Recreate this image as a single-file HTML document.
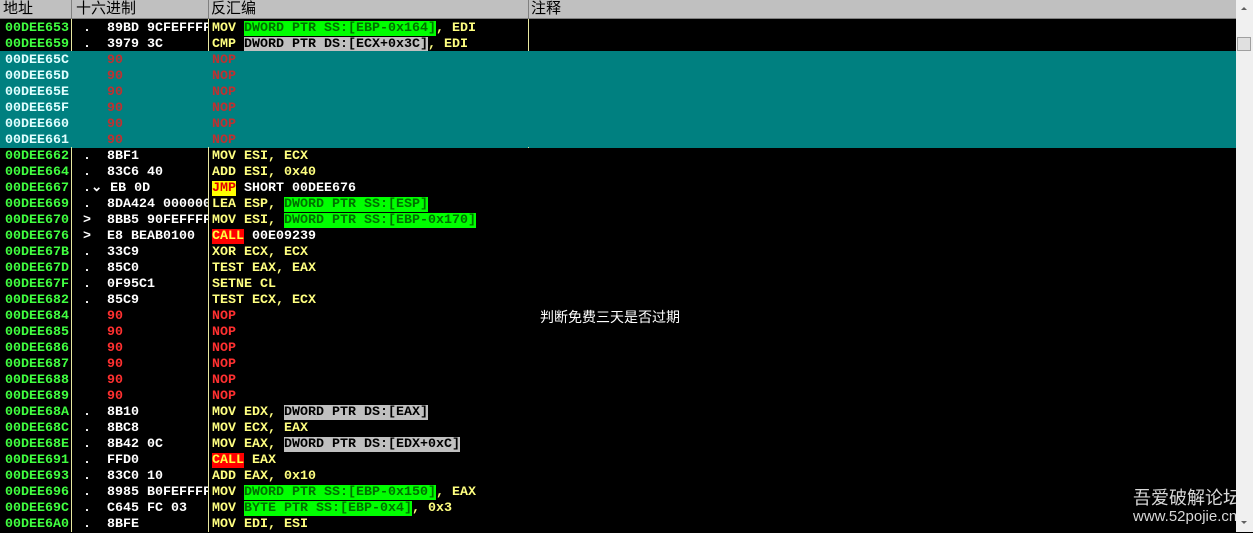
<!DOCTYPE html>
<html><head><meta charset="utf-8"><style>
body{margin:0;width:1253px;height:532px;background:#000;overflow:hidden;position:relative;font-family:"Liberation Mono",monospace;font-weight:bold;font-size:13.33px}
.hdr{position:absolute;left:0;top:0;width:1236px;height:18px;background:#c0c0c0;border-bottom:1px solid #808080;font-family:"Liberation Sans","Noto Sans CJK SC",sans-serif;font-weight:normal;font-size:15px;color:#000}
.hdr span{position:absolute;top:0;line-height:18px}
.vl{position:absolute;top:0;width:1px;height:532px;background:#e8e8a0}
.hl{position:absolute;top:0;width:1px;height:19px;background:#808080}
.r{position:absolute;left:0;width:1236px;height:16px;line-height:16px;white-space:pre}
.t{background:#008080}
.c{position:absolute;top:2px;overflow:hidden;height:16px}
.a{left:5px;width:66px;color:#40ff40}
.t .a{color:#e0ffff}
.h{left:67px;width:141px;color:#fff}
.d{left:212px;width:316px;color:#ffff80}
.red{color:#ff3030}
.t .red{color:#c03030}
.g{background:#00ff00;color:#007000}
.s{background:#c0c0c0;color:#000}
.w{color:#fff}
.j{background:#ffff00;color:#e00000}
.k{background:#ff0000;color:#ffff40}
</style></head><body>
<div class="hdr"><span style="left:3px">地址</span><span style="left:76px">十六进制</span><span style="left:211px">反汇编</span><span style="left:531px">注释</span></div>
<div class="hl" style="left:71px"></div><div class="hl" style="left:208px"></div><div class="hl" style="left:528px"></div>
<div style="position:absolute;left:0;top:51px;width:1236px;height:97px;background:#008080"></div>
<div class="vl" style="left:71px;top:19px;height:513px"></div>
<div class="vl" style="left:208px;top:19px;height:513px"></div>
<div class="vl" style="left:528px;top:19px;height:129px"></div>

<div class="r" style="top:19px"><span class="c a">00DEE653</span><span class="c h">  .  89BD 9CFEFFFF</span><span class="c d">MOV <span class="g">DWORD PTR SS:[EBP-0x164]</span>, EDI</span></div>
<div class="r" style="top:35px"><span class="c a">00DEE659</span><span class="c h">  .  3979 3C</span><span class="c d">CMP <span class="s">DWORD PTR DS:[ECX+0x3C]</span>, EDI</span></div>
<div class="r t" style="top:51px"><span class="c a">00DEE65C</span><span class="c h red">     90</span><span class="c d red">NOP</span></div>
<div class="r t" style="top:67px"><span class="c a">00DEE65D</span><span class="c h red">     90</span><span class="c d red">NOP</span></div>
<div class="r t" style="top:83px"><span class="c a">00DEE65E</span><span class="c h red">     90</span><span class="c d red">NOP</span></div>
<div class="r t" style="top:99px"><span class="c a">00DEE65F</span><span class="c h red">     90</span><span class="c d red">NOP</span></div>
<div class="r t" style="top:115px"><span class="c a">00DEE660</span><span class="c h red">     90</span><span class="c d red">NOP</span></div>
<div class="r t" style="top:131px"><span class="c a">00DEE661</span><span class="c h red">     90</span><span class="c d red">NOP</span></div>
<div class="r" style="top:147px"><span class="c a">00DEE662</span><span class="c h">  .  8BF1</span><span class="c d">MOV ESI, ECX</span></div>
<div class="r" style="top:163px"><span class="c a">00DEE664</span><span class="c h">  .  83C6 40</span><span class="c d">ADD ESI, 0x40</span></div>
<div class="r" style="top:179px"><span class="c a">00DEE667</span><span class="c h">  .⌄ EB 0D</span><span class="c d"><span class="j">JMP</span> <span class="w">SHORT 00DEE676</span></span></div>
<div class="r" style="top:195px"><span class="c a">00DEE669</span><span class="c h">  .  8DA424 00000000</span><span class="c d">LEA ESP, <span class="g">DWORD PTR SS:[ESP]</span></span></div>
<div class="r" style="top:211px"><span class="c a">00DEE670</span><span class="c h">  &gt;  8BB5 90FEFFFF</span><span class="c d">MOV ESI, <span class="g">DWORD PTR SS:[EBP-0x170]</span></span></div>
<div class="r" style="top:227px"><span class="c a">00DEE676</span><span class="c h">  &gt;  E8 BEAB0100</span><span class="c d"><span class="k">CALL</span> <span class="w">00E09239</span></span></div>
<div class="r" style="top:243px"><span class="c a">00DEE67B</span><span class="c h">  .  33C9</span><span class="c d">XOR ECX, ECX</span></div>
<div class="r" style="top:259px"><span class="c a">00DEE67D</span><span class="c h">  .  85C0</span><span class="c d">TEST EAX, EAX</span></div>
<div class="r" style="top:275px"><span class="c a">00DEE67F</span><span class="c h">  .  0F95C1</span><span class="c d">SETNE CL</span></div>
<div class="r" style="top:291px"><span class="c a">00DEE682</span><span class="c h">  .  85C9</span><span class="c d">TEST ECX, ECX</span></div>
<div class="r" style="top:307px"><span class="c a">00DEE684</span><span class="c h red">     90</span><span class="c d red">NOP</span><span style="position:absolute;left:540px;top:2px;color:#fff;font-family:'Liberation Sans','Noto Sans CJK SC',sans-serif;font-weight:normal;font-size:14px">判断免费三天是否过期</span></div>
<div class="r" style="top:323px"><span class="c a">00DEE685</span><span class="c h red">     90</span><span class="c d red">NOP</span></div>
<div class="r" style="top:339px"><span class="c a">00DEE686</span><span class="c h red">     90</span><span class="c d red">NOP</span></div>
<div class="r" style="top:355px"><span class="c a">00DEE687</span><span class="c h red">     90</span><span class="c d red">NOP</span></div>
<div class="r" style="top:371px"><span class="c a">00DEE688</span><span class="c h red">     90</span><span class="c d red">NOP</span></div>
<div class="r" style="top:387px"><span class="c a">00DEE689</span><span class="c h red">     90</span><span class="c d red">NOP</span></div>
<div class="r" style="top:403px"><span class="c a">00DEE68A</span><span class="c h">  .  8B10</span><span class="c d">MOV EDX, <span class="s">DWORD PTR DS:[EAX]</span></span></div>
<div class="r" style="top:419px"><span class="c a">00DEE68C</span><span class="c h">  .  8BC8</span><span class="c d">MOV ECX, EAX</span></div>
<div class="r" style="top:435px"><span class="c a">00DEE68E</span><span class="c h">  .  8B42 0C</span><span class="c d">MOV EAX, <span class="s">DWORD PTR DS:[EDX+0xC]</span></span></div>
<div class="r" style="top:451px"><span class="c a">00DEE691</span><span class="c h">  .  FFD0</span><span class="c d"><span class="k">CALL</span> EAX</span></div>
<div class="r" style="top:467px"><span class="c a">00DEE693</span><span class="c h">  .  83C0 10</span><span class="c d">ADD EAX, 0x10</span></div>
<div class="r" style="top:483px"><span class="c a">00DEE696</span><span class="c h">  .  8985 B0FEFFFF</span><span class="c d">MOV <span class="g">DWORD PTR SS:[EBP-0x150]</span>, EAX</span></div>
<div class="r" style="top:499px"><span class="c a">00DEE69C</span><span class="c h">  .  C645 FC 03</span><span class="c d">MOV <span class="g">BYTE PTR SS:[EBP-0x4]</span>, 0x3</span></div>
<div class="r" style="top:515px"><span class="c a">00DEE6A0</span><span class="c h">  .  8BFE</span><span class="c d">MOV EDI, ESI</span></div>

<div style="position:absolute;left:1133px;top:484px;color:#d8d8d8;font-family:'Liberation Sans','Noto Sans CJK SC',sans-serif;font-weight:normal;font-size:18px;white-space:nowrap">吾爱破解论坛</div>
<div style="position:absolute;left:1133px;top:508px;color:#d8d8d8;font-family:'Liberation Sans',sans-serif;font-weight:normal;font-size:15px;white-space:nowrap">www.52pojie.cn</div>

<div style="position:absolute;left:1236px;top:0;width:17px;height:532px;background:#f0f0f0"></div>
<div style="position:absolute;left:1241px;top:7px;width:0;height:0;border-left:3px solid transparent;border-right:3px solid transparent;border-bottom:3px solid #606060"></div>
<div style="position:absolute;left:1237px;top:37px;width:14px;height:14px;background:#e0e0e0;border:1px solid #a0a0a0;box-sizing:border-box"></div>
<div style="position:absolute;left:1241px;top:521px;width:0;height:0;border-left:3px solid transparent;border-right:3px solid transparent;border-top:3px solid #606060"></div>
</body></html>
